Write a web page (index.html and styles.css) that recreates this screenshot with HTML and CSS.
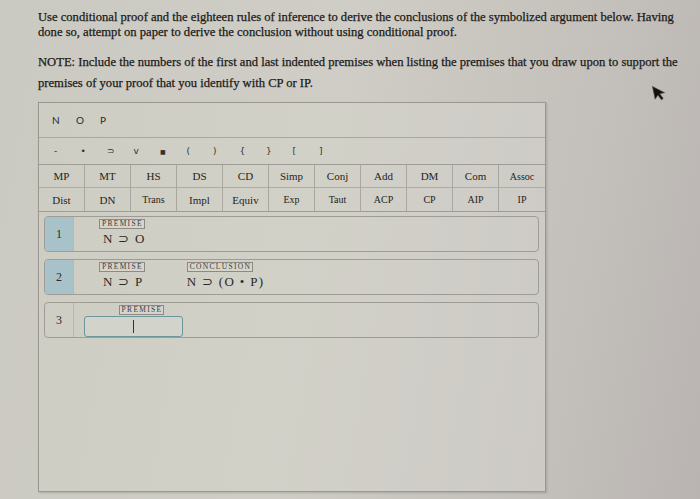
FILE: index.html
```html
<!DOCTYPE html>
<html>
<head>
<meta charset="utf-8">
<link rel="stylesheet" href="styles.css">
</head>
<body>
<div class="page">
  <div class="intro">
    <p>Use conditional proof and the eighteen rules of inference to derive the conclusions of the symbolized argument below. Having done so, attempt on paper to derive the conclusion without using conditional proof.</p>
    <p class="note">NOTE: Include the numbers of the first and last indented premises when listing the premises that you draw upon to support the premises of your proof that you identify with CP or IP.</p>
  </div>
  <div class="panel">
    <div class="vars">
      <span>N</span><span>O</span><span>P</span>
    </div>
    <div class="symbols">
      <span>-</span><span>•</span><span>⊃</span><span>v</span><span class="sq">■</span><span>(</span><span>)</span><span>{</span><span>}</span><span>[</span><span>]</span>
    </div>
    <div class="rules">
      <div>MP</div><div>MT</div><div>HS</div><div>DS</div><div>CD</div><div>Simp</div><div>Conj</div><div>Add</div><div>DM</div><div>Com</div><div class="sm">Assoc</div>
      <div>Dist</div><div>DN</div><div class="sm">Trans</div><div>Impl</div><div>Equiv</div><div class="sm">Exp</div><div class="sm">Taut</div><div class="sm">ACP</div><div class="sm">CP</div><div class="sm">AIP</div><div class="sm">IP</div>
    </div>
    <div class="proof">
      <div class="line">
        <div class="num filled">1</div>
        <div class="cell">
          <div class="tag">PREMISE</div>
          <div class="formula">N ⊃ O</div>
        </div>
      </div>
      <div class="line">
        <div class="num filled">2</div>
        <div class="cell">
          <div class="tag">PREMISE</div>
          <div class="formula">N ⊃ P</div>
        </div>
        <div class="cell concl">
          <div class="tag">CONCLUSION</div>
          <div class="formula">N ⊃ (O • P)</div>
        </div>
      </div>
      <div class="line">
        <div class="num">3</div>
        <div class="cell input-cell">
          <div class="tag">PREMISE</div>
          <div class="input"><span class="caret"></span></div>
        </div>
      </div>
    </div>
  </div>
  <svg class="pointer" width="14" height="18" viewBox="0 0 14 18">
    <path d="M1 1 L1 14 L4.5 10.5 L7 16 L9 15 L6.6 9.6 L11.5 9.6 Z" fill="#111" stroke="#444" stroke-width="0.6"/>
  </svg>
</div>
</body>
</html>
```
FILE: styles.css
```css
html, body {
  margin: 0;
  padding: 0;
}
body {
  width: 700px;
  height: 499px;
  overflow: hidden;
  background: linear-gradient(100deg, #cbcac2 0%, #cfcdc6 45%, #c3bfba 80%, #b9b4b2 100%);
  font-family: "Liberation Serif", "Times New Roman", serif;
  color: #1b1a18;
}
.page {
  position: relative;
  width: 700px;
  height: 499px;
  padding: 10px 0 0 38px;
  box-sizing: border-box;
}
.intro {
  width: 648px;
  font-size: 12.6px;
  line-height: 15px;
  -webkit-text-stroke: 0.25px #1b1a18;
}
.intro p {
  margin: 0;
}
.intro .note {
  margin-top: 12px;
  line-height: 21px;
}
.panel {
  margin-top: 8px;
  width: 508px;
  height: 390px;
  border: 1px solid #9b9891;
  box-sizing: border-box;
  background: linear-gradient(100deg, #cdcdc4 0%, #d2d1c8 50%, #cdcac6 100%);
  box-shadow: 1px 1px 2px rgba(80, 76, 70, 0.25);
}
.vars {
  height: 35px;
  display: flex;
  align-items: center;
  padding-left: 13px;
  gap: 16px;
  font-family: Lato, "Liberation Sans", sans-serif;
  font-size: 10px;
  color: #2a2a2a;
  border-bottom: 1px solid #aaa7a0;
  box-sizing: border-box;
}
.vars span {
  width: 8px;
}
.symbols {
  height: 26px;
  display: flex;
  align-items: center;
  padding-left: 15px;
  font-family: "DejaVu Sans", sans-serif;
  font-size: 9px;
  color: #333;
}
.symbols span {
  width: 26.5px;
  text-align: left;
}
.symbols .sq {
  font-size: 6px;
}
.rules {
  display: grid;
  grid-template-columns: repeat(11, 1fr);
  width: 506px;
  border-top: 1px solid #9f9c95;
  border-bottom: 1px solid #9f9c95;
}
.rules div {
  height: 23px;
  display: flex;
  align-items: center;
  justify-content: center;
  font-size: 11px;
  color: #252422;
  border-right: 1px solid #a9a69f;
  box-sizing: border-box;
}
.rules div:nth-child(-n+11) {
  border-bottom: 1px solid #aeaba4;
}
.rules div:nth-child(11n) {
  border-right: none;
}
.rules .sm {
  font-size: 10px;
}
.proof {
  padding: 4px 6px 0 5px;
  display: flex;
  flex-direction: column;
  gap: 7px;
}
.line {
  height: 36px;
  display: flex;
  border: 1px solid #9f9c95;
  border-radius: 4px;
  box-sizing: border-box;
  overflow: hidden;
}
.num {
  width: 28px;
  display: flex;
  align-items: center;
  justify-content: center;
  font-size: 12px;
  color: #2b2b2a;
  border-right: 1px solid #b3bab5;
}
.num.filled {
  background: #a7c3c9;
}
.cell {
  padding: 2px 0 0 25px;
  display: flex;
  flex-direction: column;
  align-items: flex-start;
}
.cell.concl {
  padding-left: 42px;
}
.tag {
  font-size: 7.5px;
  letter-spacing: 1.3px;
  line-height: 8px;
  padding: 0 1px 0 2px;
  border: 1px solid #8c8a84;
  color: #3a3936;
  background: #d6d5cd;
}
.formula {
  margin-top: 2px;
  padding-left: 4px;
  font-size: 13px;
  letter-spacing: 1.3px;
  color: #2a2926;
}
.concl .formula {
  padding-left: 0;
}
.input-cell {
  padding-left: 10px;
  align-items: stretch;
  width: 99px;
}
.input-cell .tag {
  align-self: center;
  margin-left: 16px;
}
.input {
  margin-top: 1px;
  height: 20px;
  border: 1.5px solid #6b979c;
  border-radius: 3px;
  display: flex;
  align-items: center;
  justify-content: center;
  background: #d2d3cb;
}
.caret {
  display: block;
  width: 1px;
  height: 13px;
  background: #333;
}
.pointer {
  position: absolute;
  left: 653px;
  top: 84px;
  transform: rotate(-12deg);
}
```
